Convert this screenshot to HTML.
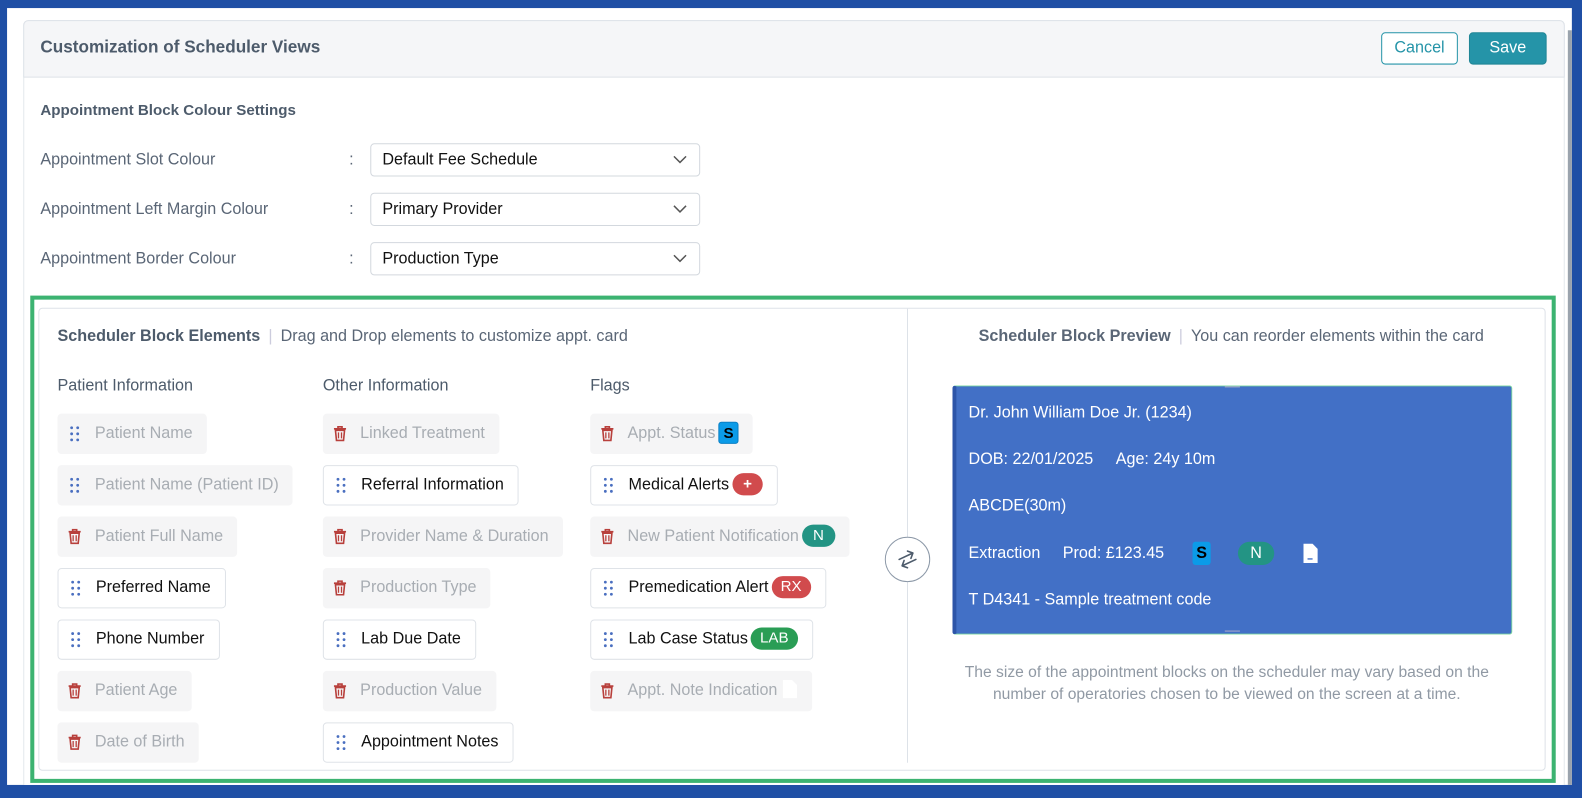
<!DOCTYPE html>
<html><head><style>
*{box-sizing:border-box;margin:0;padding:0}
body{width:1582px;height:791px;background:#1f4fa5;font-family:"Liberation Sans",sans-serif;position:relative;overflow:hidden}
#w{position:absolute;left:0;top:0;width:1582px;height:791px;transform:scale(1.0089);transform-origin:0 0}
.page{position:absolute;left:7px;top:8px;width:1551px;height:770px;background:#fff}
.sb{position:absolute;left:1554px;top:30px;width:4px;height:748px;background:#9aa3ad}
.card{position:absolute;left:23px;top:20px;width:1528px;height:758px;border:1px solid #dde2e8;border-bottom:none;border-radius:5px 5px 0 0;background:#fff}
.hdr{position:absolute;left:23px;top:20px;width:1528px;height:57px;background:#f5f6f8;border:1px solid #dde2e8;border-radius:5px 5px 0 0}
.a{position:absolute;white-space:nowrap}
.h1{left:40px;top:37px;font-size:17px;font-weight:bold;color:#4d5b6b}
.btn{position:absolute;top:32px;height:32px;border-radius:4px;font-size:16px;text-align:center;line-height:30px}
.lbl{font-size:16px;color:#5a6676}
.sel{position:absolute;left:367px;width:327px;height:33px;border:1px solid #d3d8de;border-radius:4px;font-size:16px;color:#111;padding-left:11px;line-height:31px}
.sel svg{position:absolute;right:12px;top:10px}
.green{position:absolute;left:30px;top:293px;width:1512px;height:483px;border:4px solid #3cb371}
.inner{position:absolute;left:38px;top:305px;width:1494px;height:459px;border:1px solid #dde2e8;border-radius:4px}
.it{position:absolute;height:40px;border-radius:4px;font-size:16px;line-height:40px;padding-left:37px;padding-right:14px;white-space:nowrap}
.dis{background:#f5f5f6;color:#a8adb3}
.en{background:#fff;border:1px solid #dfe3e8;color:#111;line-height:38px}
.ic{position:absolute;left:10px;top:12px}
.bd{display:inline-block;border-radius:11px;color:#fff;font-size:15px;line-height:22px;height:22px;padding:0 9px;vertical-align:middle;margin-left:3px;position:relative;top:-1px}
.sub{font-size:16px;color:#4d5b6b}
.pv{position:absolute;left:944px;top:382px;width:555px;height:247px;background:#4270c6;border:1px solid #7fd8a0;border-left:4px solid #2d55a8;border-radius:3px;color:#fff;font-size:16px}
.pv div{position:absolute;left:12px;white-space:nowrap}
</style></head><body>
<div id="w">
<div class="page"></div>
<div class="sb"></div>
<div class="card"></div>
<div class="hdr"></div>
<div class="a h1">Customization of Scheduler Views</div>
<div class="btn" style="left:1369px;width:76px;border:1px solid #2594a8;color:#2594a8;background:#fff">Cancel</div>
<div class="btn" style="left:1456px;width:77px;background:#2594a8;color:#fff;border:1px solid #208696">Save</div>
<div class="a" style="left:40px;top:101px;font-size:15px;font-weight:bold;color:#4d5b6b">Appointment Block Colour Settings</div>
<div class="a lbl" style="left:40px;top:150px">Appointment Slot Colour</div>
<div class="a lbl" style="left:40px;top:199px">Appointment Left Margin Colour</div>
<div class="a lbl" style="left:40px;top:248px">Appointment Border Colour</div>
<div class="a lbl" style="left:346px;top:150px">:</div>
<div class="a lbl" style="left:346px;top:199px">:</div>
<div class="a lbl" style="left:346px;top:248px">:</div>
<div class="sel" style="top:142px">Default Fee Schedule<svg width="14" height="10"><path d="M1 2l6 6 6-6" stroke="#555" stroke-width="1.5" fill="none"/></svg></div>
<div class="sel" style="top:191px">Primary Provider<svg width="14" height="10"><path d="M1 2l6 6 6-6" stroke="#555" stroke-width="1.5" fill="none"/></svg></div>
<div class="sel" style="top:240px">Production Type<svg width="14" height="10"><path d="M1 2l6 6 6-6" stroke="#555" stroke-width="1.5" fill="none"/></svg></div>
<div class="green"></div>
<div class="inner"></div>
<div style="position:absolute;left:899px;top:306px;width:1px;height:450px;background:#dde2e8"></div>
<div class="a" style="left:57px;top:325px;font-size:16px"><b style="color:#4d5b6b">Scheduler Block Elements</b><span style="color:#ccd;margin:0 8px">|</span><span style="color:#5a6676">Drag and Drop elements to customize appt. card</span></div>
<div class="a" style="left:970px;top:325px;font-size:16px"><b style="color:#5a6676">Scheduler Block Preview</b><span style="color:#ccd;margin:0 8px">|</span><span style="color:#5a6676">You can reorder elements within the card</span></div>
<div class="a sub" style="left:57px;top:374px">Patient Information</div>
<div class="a sub" style="left:320px;top:374px">Other Information</div>
<div class="a sub" style="left:585px;top:374px">Flags</div>

<svg width="0" height="0" style="position:absolute"><defs>
<g id="dr"><circle cx="2" cy="2" r="1.4" fill="#4a6fc0"/><circle cx="8" cy="2" r="1.4" fill="#4a6fc0"/><circle cx="2" cy="8" r="1.4" fill="#4a6fc0"/><circle cx="8" cy="8" r="1.4" fill="#4a6fc0"/><circle cx="2" cy="14" r="1.4" fill="#4a6fc0"/><circle cx="8" cy="14" r="1.4" fill="#4a6fc0"/></g>
<g id="tr"><path d="M1 3h12M5 3V1h4v2M2.5 4.5l1 10h7l1-10z" stroke="#b8403c" stroke-width="1.6" fill="none"/><path d="M5.5 6.5v6M8.5 6.5v6" stroke="#b8403c" stroke-width="1.3"/></g>
</defs></svg>

<div class="it dis" style="left:57px;top:410px"><svg class="ic" width="12" height="17" style="left:12px"><use href="#dr"/></svg>Patient Name</div>
<div class="it dis" style="left:57px;top:461px"><svg class="ic" width="12" height="17" style="left:12px"><use href="#dr"/></svg>Patient Name (Patient ID)</div>
<div class="it dis" style="left:57px;top:512px"><svg class="ic" width="14" height="16"><use href="#tr"/></svg>Patient Full Name</div>
<div class="it en" style="left:57px;top:563px"><svg class="ic" width="12" height="17" style="left:12px;top:11px"><use href="#dr"/></svg>Preferred Name</div>
<div class="it en" style="left:57px;top:614px"><svg class="ic" width="12" height="17" style="left:12px;top:11px"><use href="#dr"/></svg>Phone Number</div>
<div class="it dis" style="left:57px;top:665px"><svg class="ic" width="14" height="16"><use href="#tr"/></svg>Patient Age</div>
<div class="it dis" style="left:57px;top:716px"><svg class="ic" width="14" height="16"><use href="#tr"/></svg>Date of Birth</div>

<div class="it dis" style="left:320px;top:410px"><svg class="ic" width="14" height="16"><use href="#tr"/></svg>Linked Treatment</div>
<div class="it en" style="left:320px;top:461px"><svg class="ic" width="12" height="17" style="left:12px;top:11px"><use href="#dr"/></svg>Referral Information</div>
<div class="it dis" style="left:320px;top:512px"><svg class="ic" width="14" height="16"><use href="#tr"/></svg>Provider Name &amp; Duration</div>
<div class="it dis" style="left:320px;top:563px"><svg class="ic" width="14" height="16"><use href="#tr"/></svg>Production Type</div>
<div class="it en" style="left:320px;top:614px"><svg class="ic" width="12" height="17" style="left:12px;top:11px"><use href="#dr"/></svg>Lab Due Date</div>
<div class="it dis" style="left:320px;top:665px"><svg class="ic" width="14" height="16"><use href="#tr"/></svg>Production Value</div>
<div class="it en" style="left:320px;top:716px"><svg class="ic" width="12" height="17" style="left:12px;top:11px"><use href="#dr"/></svg>Appointment Notes</div>

<div class="it dis" style="left:585px;top:410px"><svg class="ic" width="14" height="16"><use href="#tr"/></svg>Appt. Status<span class="bd" style="background:#0b9be8;color:#000;border-radius:3px;padding:0 4px;font-weight:bold;height:22px;border:1px solid #0a7fc4">S</span></div>
<div class="it en" style="left:585px;top:461px"><svg class="ic" width="12" height="17" style="left:12px;top:11px"><use href="#dr"/></svg>Medical Alerts<span class="bd" style="background:#d14b4d;padding:0 11px;font-weight:bold">+</span></div>
<div class="it dis" style="left:585px;top:512px"><svg class="ic" width="14" height="16"><use href="#tr"/></svg>New Patient Notification<span class="bd" style="background:#239484;padding:0 11px">N</span></div>
<div class="it en" style="left:585px;top:563px"><svg class="ic" width="12" height="17" style="left:12px;top:11px"><use href="#dr"/></svg>Premedication Alert<span class="bd" style="background:#d14b4d">RX</span></div>
<div class="it en" style="left:585px;top:614px"><svg class="ic" width="12" height="17" style="left:12px;top:11px"><use href="#dr"/></svg>Lab Case Status<span class="bd" style="background:#2a9d55">LAB</span></div>
<div class="it dis" style="left:585px;top:665px"><svg class="ic" width="14" height="16"><use href="#tr"/></svg>Appt. Note Indication <svg width="16" height="20" style="vertical-align:middle;position:relative;top:-2px"><path d="M1 1h9l5 5v13H1z" fill="#fff"/></svg></div>

<div style="position:absolute;left:877px;top:532px;width:45px;height:45px;border:1px solid #8d99a8;border-radius:50%;background:#fff"><svg width="45" height="45" style="position:absolute;left:-1px;top:-1px"><g transform="rotate(-25 22.5 22.5)" stroke="#4d5b6b" stroke-width="1.6" fill="none" stroke-linecap="round" stroke-linejoin="round"><path d="M15 19h15M26 15l4 4-4 4"/><path d="M30 26H15M19 22l-4 4 4 4"/></g></svg></div>

<div class="pv">
<div style="top:18px">Dr. John William Doe Jr. (1234)</div>
<div style="top:64px">DOB: 22/01/2025&nbsp;&nbsp;&nbsp;&nbsp;&nbsp;Age: 24y 10m</div>
<div style="top:110px">ABCDE(30m)</div>
<div style="top:157px">Extraction&nbsp;&nbsp;&nbsp;&nbsp;&nbsp;Prod: £123.45</div>
<div style="left:234px;top:154px;width:18px;height:23px;background:#0b9be8;border-radius:3px;color:#000;text-align:center;line-height:23px;font-weight:bold">S</div>
<div style="left:279px;top:154px;width:36px;height:23px;background:#239484;border-radius:12px;text-align:center;line-height:23px">N</div>
<svg style="position:absolute;left:343px;top:155px" width="16" height="21"><path d="M1 1h9l5 5v14H1z" fill="#fff"/><path d="M5 16h5" stroke="#4270c6" stroke-width="1.3"/></svg>
<div style="top:203px">T D4341 - Sample treatment code</div>
</div>
<div style="position:absolute;left:1214px;top:383px;width:15px;height:1px;background:#aac"></div>
<div style="position:absolute;left:1214px;top:625px;width:15px;height:1px;background:#aac"></div>
<div class="a" style="left:900px;top:656px;width:632px;text-align:center;font-size:15.5px;color:#9099a4;line-height:22px">The size of the appointment blocks on the scheduler may vary based on the<br>number of operatories chosen to be viewed on the screen at a time.</div>
</div>
</body></html>
